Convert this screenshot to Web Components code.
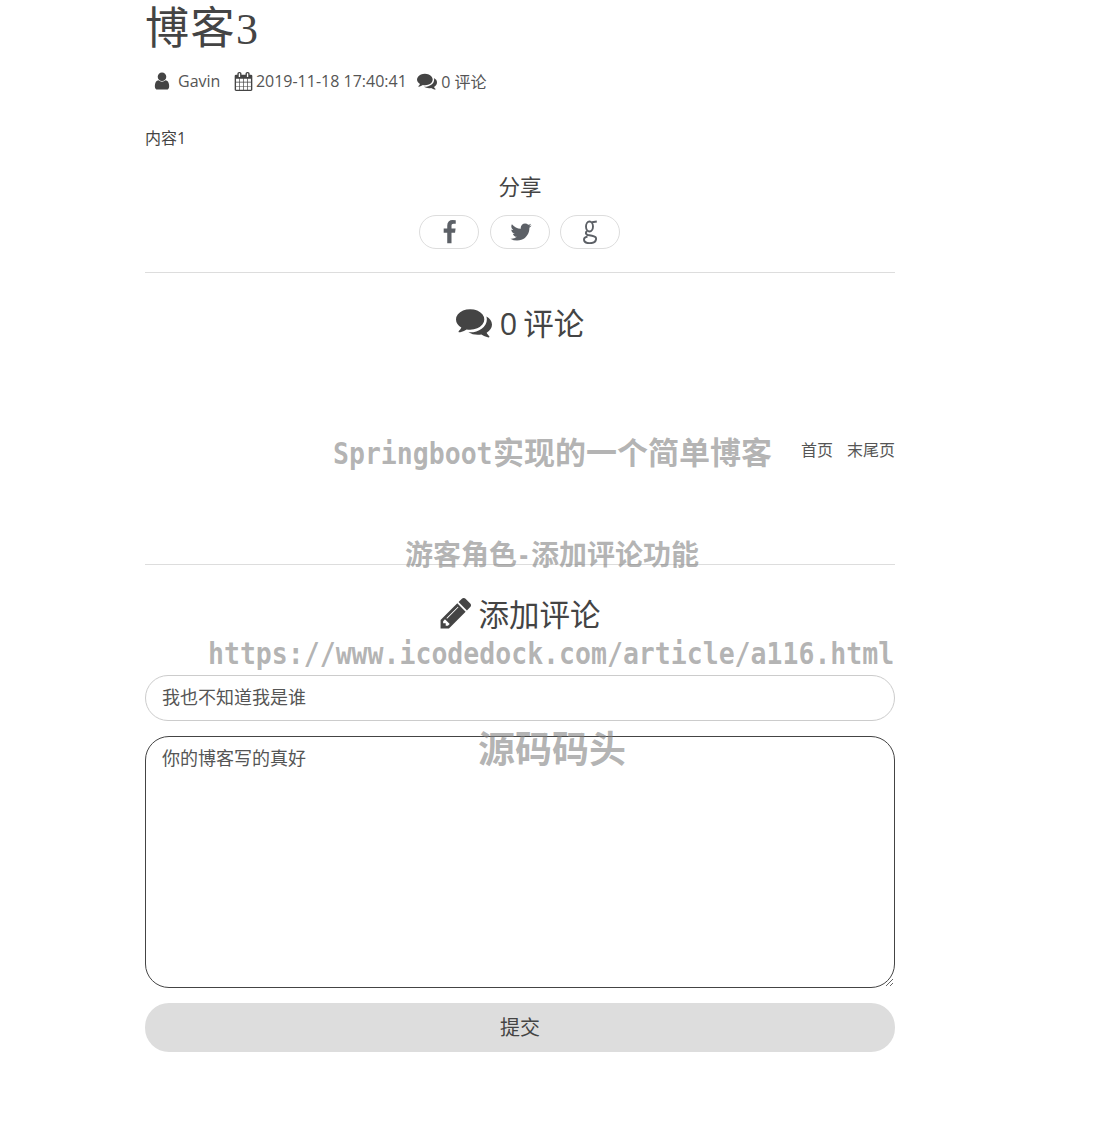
<!DOCTYPE html>
<html lang="zh">
<head>
<meta charset="utf-8">
<title>博客3</title>
<style>
  html, body { margin: 0; background: #fff; }
  body { font-family: "Open Sans", "Noto Sans CJK SC", sans-serif; color: #444; font-size: 14px; }
</style>
</head>
<body>
<blog-page>
  <post-header title-text="博客3" author="Gavin" date="2019-11-18 17:40:41" comments="0 评论"></post-header>
  <post-body>内容1</post-body>
  <share-bar></share-bar>
  <section-heading icon="comments" first>0 评论</section-heading>
  <post-pager></post-pager>
  <section-heading icon="pencil">添加评论</section-heading>
  <comment-form></comment-form>
</blog-page>
<water-mark></water-mark>

<script>
const ICONS = {
  user: 'M1536 1399q0 109-62.5 187t-150.5 78h-854q-88 0-150.5-78t-62.5-187q0-85 8.5-160.5t31.5-152 58.5-131 94-89 134.5-34.5q131 128 313 128t313-128q76 0 134.5 34.5t94 89 58.5 131 31.5 152 8.5 160.5zm-256-887q0 159-112.5 271.5t-271.5 112.5-271.5-112.5-112.5-271.5 112.5-271.5 271.5-112.5 271.5 112.5 112.5 271.5z',
  calendar: 'M192 1664h288v-288h-288v288zm352 0h320v-288h-320v288zm-352-352h288v-320h-288v320zm352 0h320v-320h-320v320zm-352-384h288v-288h-288v288zm736 736h320v-288h-320v288zm-384-736h320v-288h-320v288zm768 736h288v-288h-288v288zm-384-352h320v-320h-320v320zm-352-864v-288q0-13-9.500-22.500t-22.500-9.500h-64q-13 0-22.500 9.500t-9.500 22.500v288q0 13 9.500 22.500t22.500 9.500h64q13 0 22.500-9.500t9.500-22.500zm736 864h288v-320h-288v320zm-384-384h320v-288h-320v288zm384 0h288v-288h-288v288zm32-480v-288q0-13-9.500-22.500t-22.500-9.500h-64q-13 0-22.500 9.500t-9.500 22.500v288q0 13 9.500 22.500t22.500 9.500h64q13 0 22.500-9.500t9.500-22.500zm384-64v1280q0 52-38 90t-90 38h-1408q-52 0-90-38t-38-90v-1280q0-52 38-90t90-38h128v-96q0-66 47-113t113-47h64q66 0 113 47t47 113v96h384v-96q0-66 47-113t113-47h64q66 0 113 47t47 113v96h128q52 0 90 38t38 90z',
  comments: 'M1408 768q0 139-94 257t-256.500 186.500-353.500 68.500q-86 0-176-16-124 88-278 128-36 9-86 16h-3q-11 0-20.500-8t-11.500-21q-1-3-1-6.500t.5-6.500 2-6l2.500-5 3.500-5.500 4-5 4.500-5 4-4.500q5-6 23-25t26-29.500 22.500-29 25-38.500 20.500-44q-124-72-195-177t-71-224q0-139 94-257t256.500-186.500 353.500-68.500 353.500 68.500 256.500 186.500 94 257zm384 256q0 120-71 224.500t-195 176.500q10 24 20.500 44t25 38.500 22.500 29 26 29.500 23 25q1 1 4 4.500t4.500 5 4 5 3.500 5.500l2.500 5 2 6 .5 6.500-1 6.500q-3 14-13 22t-22 7q-50-7-86-16-154-40-278-128-90 16-176 16-271 0-472-132 58 4 88 4 161 0 309-45t264-129q125-92 192-212t67-254q0-77-23-152 129 71 204 178t75 230z',
  pencil: 'M491 1536l91-91-235-235-91 91v107h128v128h107zm523-928q0-22-22-22-10 0-17 7l-542 542q-7 7-7 17 0 22 22 22 10 0 17-7l542-542q7-7 7-17zm-54-192l416 416-832 832h-416v-416zm683 96q0 53-37 90l-166 166-416-416 166-165q36-38 90-38 53 0 91 38l235 234q37 39 37 91z',
  facebook: 'M1343 12v264h-157q-86 0-116 36t-30 108v189h293l-39 296h-254v759h-306v-759h-255v-296h255v-218q0-186 104-288.500t277-102.500q147 0 228 12z',
  twitter: 'M1684 408q-67 98-162 167 1 14 1 42 0 130-38 259.500t-115.500 248.500-184.500 210.500-258 146-323 54.500q-271 0-496-145 35 4 78 4 225 0 401-138-105-2-188-64.500t-114-159.500q33 5 61 5 43 0 85-11-112-23-185.500-111.500t-73.500-205.500v-4q68 38 146 41-66-44-105-115t-39-154q0-88 44-163 121 149 294.500 238.500t371.500 99.500q-8-38-8-74 0-134 94.500-228.500t228.500-94.500q140 0 236 102 109-21 205-78-37 115-142 182 87-9 174-47z'
};

const icon = (name, size) =>
  `<svg width="${size}" height="${size}" viewBox="0 0 1792 1792" fill="currentColor" aria-hidden="true"><path d="${ICONS[name]}"/></svg>`;

class Base extends HTMLElement {
  constructor(html) {
    super();
    this.attachShadow({ mode: 'open' });
    this.shadowRoot.innerHTML = html;
  }
}

class BlogPage extends Base {
  constructor() {
    super(`<style>
      :host { display: block; width: 750px; margin-left: 145px; padding-bottom: 92px; }
    </style><slot></slot>`);
  }
}

class PostHeader extends HTMLElement {
  constructor() {
    super();
    this.attachShadow({ mode: 'open' });
  }
  connectedCallback() {
    this.shadowRoot.innerHTML = `<style>
      :host { display: block; }
      h1 {
        margin: 0;
        font: 400 44px/60px "Liberation Serif", "Noto Sans CJK SC", serif;
        letter-spacing: 1.500px;
        color: #444;
      }
      .meta {
        display: flex;
        align-items: center;
        height: 24px;
        margin-top: 9px;
        padding-left: 7px;
        font-size: 16px;
        color: #555;
      }
      .item { display: flex; align-items: center; }
      svg { display: block; color: #444; }
      .author { margin-right: 14px; }
      .author svg { margin-right: 6px; }
      .date { margin-right: 10.500px; }
      .date svg { margin-right: 2.500px; }
      .count svg { margin-right: 4px; }
    </style>
    <h1>${this.getAttribute('title-text')}</h1>
    <div class="meta">
      <span class="item author">${icon('user', 20)}<span>${this.getAttribute('author')}</span></span>
      <span class="item date">${icon('calendar', 19)}<span>${this.getAttribute('date')}</span></span>
      <span class="item count">${icon('comments', 20)}<span>${this.getAttribute('comments')}</span></span>
    </div>`;
  }
}

class PostBody extends Base {
  constructor() {
    super(`<style>
      :host { display: block; margin-top: 33px; font-size: 16px; line-height: 24px; color: #444; }
    </style><slot></slot>`);
  }
}

class ShareBar extends Base {
  constructor() {
    super(`<style>
      :host {
        display: block;
        margin-top: 25px;
        padding-bottom: 23px;
        border-bottom: 1px solid #ddd;
        text-align: center;
      }
      .label { font-size: 21.500px; line-height: 24px; color: #444; }
      .buttons {
        display: flex;
        justify-content: center;
        gap: 10.500px;
        margin-top: 16px;
        padding-right: 1px;
      }
      a {
        box-sizing: border-box;
        width: 60px;
        height: 34px;
        border: 1px solid #ddd;
        border-radius: 17px;
        display: flex;
        align-items: center;
        justify-content: center;
        color: #5c6066;
      }
      svg { display: block; }
      .tw { padding-left: 2px; }
      .gp { padding-right: 1px; }
    </style>
    <div class="label">分享</div>
    <div class="buttons">
      <a>${icon('facebook', 25)}</a>
      <a class="tw">${icon('twitter', 24)}</a>
      <a class="gp"><svg width="14" height="24" viewBox="0 0 14 24" fill="none" stroke="currentColor" stroke-width="1.900" aria-hidden="true">
        <ellipse cx="6.500" cy="6.500" rx="3.500" ry="5"/>
        <path d="M9 2.200 L13.800 1.500 M4 11 C2 13 3 14.500 5 15 L9 15.700 C12 16.300 13.500 17.500 13 19.500 C12.500 22 9.500 23.200 6.500 23.200 C3 23.200 1 21.500 1 19.500 C1 18 2.500 17 4.500 16.500"/>
      </svg></a>
    </div>`);
  }
}

class SectionHeading extends HTMLElement {
  constructor() {
    super();
    this.attachShadow({ mode: 'open' });
  }
  connectedCallback() {
    const first = this.hasAttribute('first');
    this.shadowRoot.innerHTML = `<style>
      :host {
        display: flex;
        justify-content: center;
        align-items: center;
        height: 42px;
        margin-top: ${first ? 28 : 27}px;
        font-size: 30.500px;
        word-spacing: -2px;
        color: #444;
      }
      svg { display: block; margin: 0 ${first ? 8 : 5}px 0 ${first ? 0 : -2}px; flex: none; }
    </style>${icon(this.getAttribute('icon'), 36)}<slot></slot>`;
  }
}

class PostPager extends Base {
  constructor() {
    super(`<style>
      :host {
        display: flex;
        justify-content: flex-end;
        gap: 14px;
        margin-top: 95px;
        padding-bottom: 102px;
        border-bottom: 1px solid #ddd;
        font-size: 16px;
        line-height: 24px;
        color: #555;
      }
    </style><span>首页</span><span>末尾页</span>`);
  }
}

class CommentForm extends Base {
  constructor() {
    super(`<style>
      :host { display: flex; flex-direction: column; gap: 15px; margin-top: 41px; }
      input, textarea, button {
        display: block;
        box-sizing: border-box;
        width: 100%;
        margin: 0;
        font: 400 18px/24px "Open Sans", "Noto Sans CJK SC", sans-serif;
        color: #555;
        outline: none;
      }
      input {
        height: 46px;
        padding: 0 16px 4px;
        border: 1px solid #ccc;
        border-radius: 23px;
        background: #fff;
      }
      textarea {
        height: 252px;
        padding: 9px 16px;
        border: 1px solid #444;
        border-radius: 24px;
        background: #fff;
      }
      button {
        height: 49px;
        border: 0;
        border-radius: 24px;
        background: #ddd;
        color: #444;
        font-size: 20px;
      }
    </style>
    <input type="text" value="我也不知道我是谁">
    <textarea>你的博客写的真好</textarea>
    <button type="button">提交</button>`);
  }
}

class WaterMark extends Base {
  constructor() {
    super(`<style>
      :host { position: absolute; inset: 0; pointer-events: none; display: block; }
      div {
        position: absolute;
        white-space: nowrap;
        font-family: "Noto Sans CJK SC", sans-serif;
        font-weight: 700;
        color: rgba(130, 130, 130, .6);
      }
      i {
        display: inline-block;
        font: 700 31px/1 "DejaVu Sans Mono", monospace;
        transform: scaleX(.855);
        transform-origin: 0 50%;
      }
      .a { left: 333px; top: 429px; font-size: 31px; line-height: 44px; }
      .a i { width: 160px; }
      .b { left: 405px; top: 533px; font-size: 28px; line-height: 40px; }
      .b i { width: 14px; font-size: 26px; }
      .c { left: 208px; top: 638px; line-height: 40px; }
      .d { left: 478px; top: 724px; font-size: 37px; line-height: 46px; }
    </style>
    <div class="a"><i>Springboot</i>实现的一个简单博客</div>
    <div class="b">游客角色<i>-</i>添加评论功能</div>
    <div class="c"><i>https://www.icodedock.com/article/a116.html</i></div>
    <div class="d">源码码头</div>`);
  }
}

customElements.define('blog-page', BlogPage);
customElements.define('post-header', PostHeader);
customElements.define('post-body', PostBody);
customElements.define('share-bar', ShareBar);
customElements.define('section-heading', SectionHeading);
customElements.define('post-pager', PostPager);
customElements.define('comment-form', CommentForm);
customElements.define('water-mark', WaterMark);
</script>
</body>
</html>
